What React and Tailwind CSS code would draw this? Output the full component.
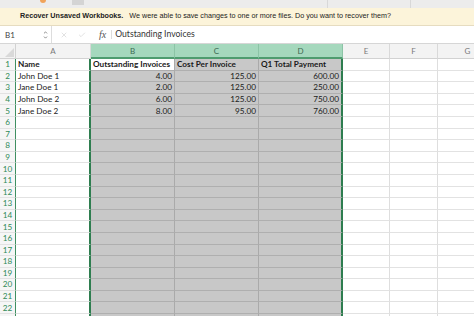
import { ChevronUp, ChevronDown, X, Check } from 'lucide-react';

const cols = [
  { key: 'A', w: 'w-[75px]' },
  { key: 'B', w: 'w-[84px]' },
  { key: 'C', w: 'w-[84px]' },
  { key: 'D', w: 'w-[84px]' },
  { key: 'E', w: 'w-[47px]' },
  { key: 'F', w: 'w-[48px]' },
  { key: 'G', w: 'w-[60px]' },
];

const data = [
  ['Name', 'Outstanding Invoices', 'Cost Per Invoice', 'Q1 Total Payment'],
  ['John Doe 1', '4.00', '125.00', '600.00'],
  ['Jane Doe 1', '2.00', '125.00', '250.00'],
  ['John Doe 2', '6.00', '125.00', '750.00'],
  ['Jane Doe 2', '8.00', '95.00', '760.00'],
];

const selected = ['B', 'C', 'D'];

function Cell({ col, value, row }) {
  const isSel = selected.includes(col.key);
  const isActive = row === 1 && col.key === 'B';
  const bold = row === 1;
  const numeric = row > 1 && col.key !== 'A';

  let cls = `${col.w} shrink-0 h-full flex items-center px-[2px] whitespace-nowrap border-b `;
  if (isActive) cls += 'bg-white border-b-[#acacac] ';
  else if (isSel) cls += 'bg-[#c8c8c8] border-b-[#afafaf] ';
  else cls += 'bg-white border-b-[#e2e2e2] ';

  if (col.key === 'A' || col.key === 'D') cls += 'border-r-2 border-r-[#2e7d4f] ';
  else if (isSel) cls += 'border-r border-r-[#aaaaaa] ';
  else cls += 'border-r border-r-[#dedede] ';

  if (numeric) cls += 'justify-end ';
  if (bold) cls += 'font-bold ';

  return <div className={cls}>{value}</div>;
}

export default function App() {
  const rows = Array.from({ length: 23 }, (_, i) => i + 1);

  return (
    <div className="w-[474px] h-[316px] overflow-hidden bg-white text-[#1a1a1a]" style={{ fontFamily: 'Lato, "Liberation Sans", sans-serif' }}>
      {/* toolbar remnant */}
      <div className="h-[8px] bg-[#ececec] flex items-start">
        <div className="ml-[40px] w-[6px] h-[3px] bg-[#f0a35a] rounded-b-sm" />
        <div className="ml-[26px] w-[12px] h-[5px] bg-[#d4d4d4]" />
        <div className="ml-[243px] w-px h-[8px] bg-[#d8d8d8]" />
        <div className="ml-[82px] w-px h-[8px] bg-[#d8d8d8]" />
      </div>

      {/* recover bar */}
      <div className="h-[18px] bg-[#fcf4da] border-b border-[#e6dcc0] flex items-center pl-[20px] text-[7.2px] text-[#222]" style={{ fontFamily: '"Liberation Sans", Arial, sans-serif' }}>
        <span className="font-semibold">Recover Unsaved Workbooks.</span>
        <span className="ml-[6px]">We were able to save changes to one or more files. Do you want to recover them?</span>
      </div>

      {/* formula bar */}
      <div className="h-[18px] bg-white border-b border-[#d6d6d6] flex items-center text-[8px]">
        <div className="w-[52px] h-full flex items-center justify-between pl-[5px] pr-[3px] border-r border-[#dddddd] text-[#444]">
          <span>B1</span>
          <div className="flex flex-col items-center text-[#777]">
            <ChevronUp size={5} strokeWidth={4} />
            <ChevronDown size={5} strokeWidth={4} />
          </div>
        </div>
        <X size={8} className="ml-[8px] text-[#c4c4c4]" strokeWidth={1.5} />
        <Check size={8} className="ml-[10px] text-[#c4c4c4]" strokeWidth={1.5} />
        <span className="ml-[13px] italic text-[#555] text-[10px]" style={{ fontFamily: '"Liberation Serif", serif' }}>fx</span>
        <div className="ml-[5px] w-px h-[9px] bg-[#dcdcdc]" />
        <span className="ml-[3px] text-[#333] text-[8.6px]">Outstanding Invoices</span>
      </div>

      {/* column headers */}
      <div className="h-[15px] flex text-[8px] bg-[#f3f3f3]">
        <div className="w-[16px] shrink-0 h-full relative border-r border-b border-[#d2d2d2]">
          <div className="absolute right-[1px] bottom-[1px] w-0 h-0 border-l-[9px] border-l-transparent border-b-[9px] border-b-[#d9d9d9]" />
        </div>
        {cols.map((c) => {
          const sel = selected.includes(c.key);
          return (
            <div
              key={c.key}
              className={`${c.w} shrink-0 h-full flex items-center justify-center ${
                sel
                  ? 'bg-[#a5d8bd] text-[#3d6b53] border-r border-r-[#8cc4a6] border-b-2 border-b-[#4e9c6f]'
                  : 'text-[#7a7a7a] border-r border-r-[#d9d9d9] border-b border-b-[#d2d2d2]'
              }`}
            >
              {c.key}
            </div>
          );
        })}
      </div>

      {/* grid rows */}
      {rows.map((r) => (
        <div key={r} className="h-[11.6px] flex text-[8.2px] leading-none">
          <div className="w-[16px] shrink-0 h-full flex items-center justify-center bg-[#f6f6f6] text-[#2f8a56] border-r border-r-[#3f8f61] border-b border-b-[#e2e2e2]">
            {r < 23 ? r : ''}
          </div>
          {cols.map((c, i) => (
            <Cell key={c.key} col={c} row={r} value={data[r - 1] ? data[r - 1][i] : ''} />
          ))}
        </div>
      ))}
    </div>
  );
}
